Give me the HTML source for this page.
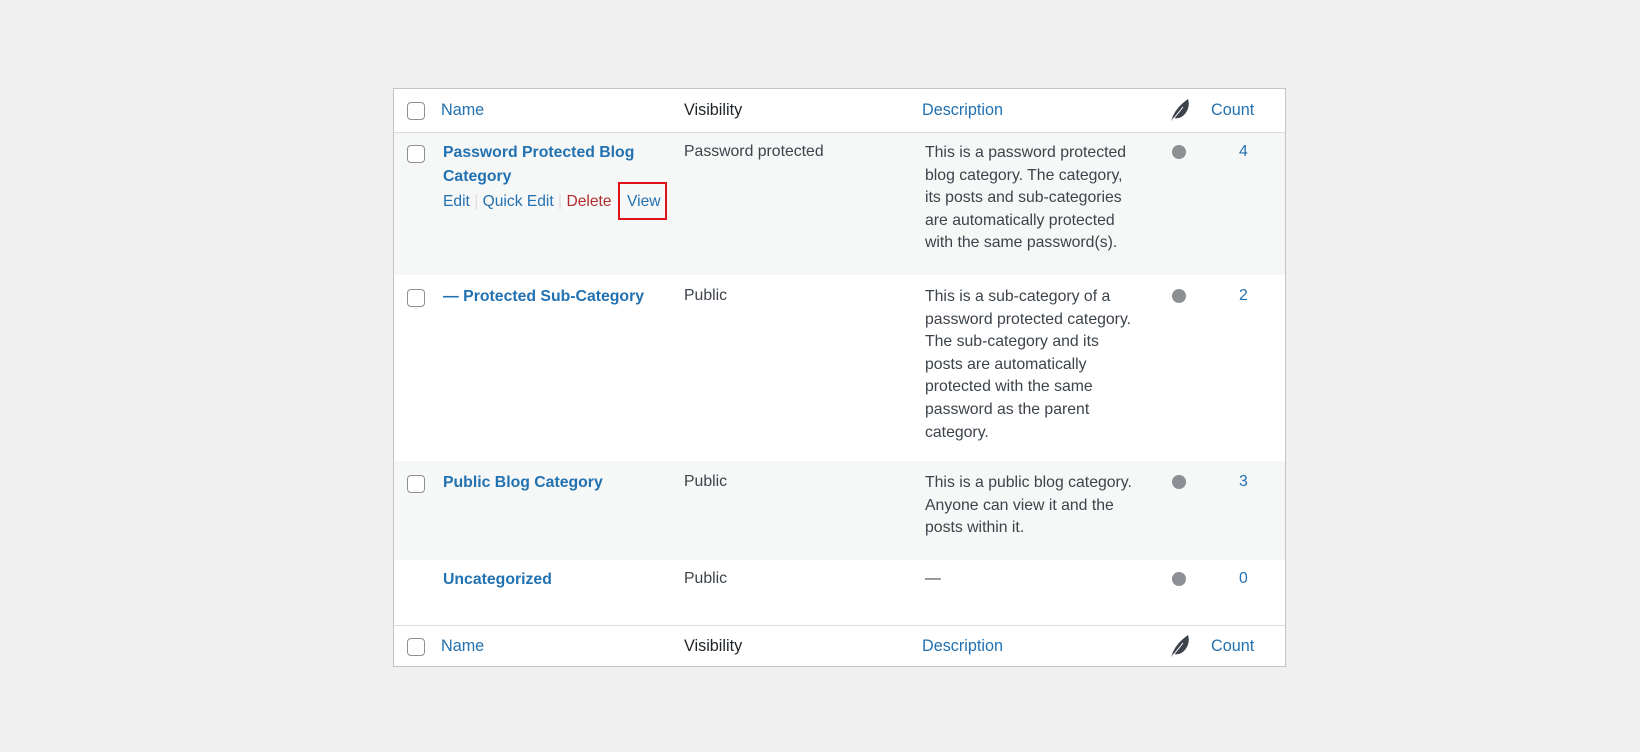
<!DOCTYPE html>
<html><head><meta charset="utf-8"><style>
body{margin:0;width:1640px;height:752px;background:#f0f0f1;font-family:"Liberation Sans",sans-serif;position:relative;overflow:hidden;color:#3c434a}
.t{position:absolute;left:393px;top:88px;width:893px;height:579px;background:#fff;border:1px solid #c3c4c7;box-sizing:border-box}
.r{position:absolute;left:0;width:100%}
.a{position:absolute;white-space:nowrap}
.cb{position:absolute;left:13px;width:16px;height:16px;border:1px solid #8c8f94;border-radius:4px;background:#fff}
.ttl{color:#2271b1;font-weight:bold;font-size:15.8px;line-height:23.5px}
.txt{font-size:15.8px;line-height:22.6px;color:#3c434a}
.lnk{color:#2271b1}
.h{font-size:16.2px}
.dot{position:absolute;left:778px;width:14px;height:14px;border-radius:50%;background:#8c8f94}
</style></head><body>
<div class="t">
 <div class="r" style="top:0;height:43px;border-bottom:1px solid #dcdcde">
  <div class="cb" style="top:13px"></div>
  <div class="a h lnk" style="left:47px;top:12px">Name</div>
  <div class="a h" style="left:290px;top:12px;color:#1d2327">Visibility</div>
  <div class="a h lnk" style="left:528px;top:12px">Description</div>
  <svg class="a" style="left:774px;top:7px" width="24" height="28" viewBox="0 0 24 28"><path d="M3 26 C5 18 9 11 20 3 C22 9 20 15 16 19 C13 22 9 23 5 22 Z" fill="#3c434a"/><path d="M3 26 L15 11" stroke="#fff" stroke-width="1"/></svg>
  <div class="a h lnk" style="left:817px;top:12px">Count</div>
 </div>
 <div class="r" style="top:44px;height:142px;background:#f6f7f7">
  <div class="cb" style="top:12px"></div>
  <div class="a ttl" style="left:49px;top:8px">Password Protected Blog<br>Category</div>
  <div class="a" style="left:49px;top:60px;font-size:15.6px"><span class="lnk">Edit</span> <span style="color:#dcdcde">|</span> <span class="lnk">Quick Edit</span> <span style="color:#dcdcde">|</span> <span style="color:#b32d2e">Delete</span></div>
  <div class="a" style="left:224px;top:49px;width:49px;height:38px;border:2.5px solid #e0131a;box-sizing:border-box"></div>
  <div class="a lnk" style="left:233px;top:60px;font-size:15.6px">View</div>
  <div class="a txt" style="left:290px;top:8px">Password protected</div>
  <div class="a txt" style="left:531px;top:9px">This is a password protected<br>blog category. The category,<br>its posts and sub-categories<br>are automatically protected<br>with the same password(s).</div>
  <div class="dot" style="top:12px"></div>
  <div class="a txt lnk" style="left:845px;top:8px">4</div>
 </div>
 <div class="r" style="top:186px;height:186px">
  <div class="cb" style="top:14px"></div>
  <div class="a ttl" style="left:49px;top:10px">— Protected Sub-Category</div>
  <div class="a txt" style="left:290px;top:10px">Public</div>
  <div class="a txt" style="left:531px;top:11px">This is a sub-category of a<br>password protected category.<br>The sub-category and its<br>posts are automatically<br>protected with the same<br>password as the parent<br>category.</div>
  <div class="dot" style="top:14px"></div>
  <div class="a txt lnk" style="left:845px;top:10px">2</div>
 </div>
 <div class="r" style="top:372px;height:99px;background:#f6f7f7">
  <div class="cb" style="top:14px"></div>
  <div class="a ttl" style="left:49px;top:10px">Public Blog Category</div>
  <div class="a txt" style="left:290px;top:10px">Public</div>
  <div class="a txt" style="left:531px;top:11px">This is a public blog category.<br>Anyone can view it and the<br>posts within it.</div>
  <div class="dot" style="top:14px"></div>
  <div class="a txt lnk" style="left:845px;top:10px">3</div>
 </div>
 <div class="r" style="top:471px;height:65px">
  <div class="a ttl" style="left:49px;top:8px">Uncategorized</div>
  <div class="a txt" style="left:290px;top:8px">Public</div>
  <div class="a txt" style="left:531px;top:8px">—</div>
  <div class="dot" style="top:12px"></div>
  <div class="a txt lnk" style="left:845px;top:8px">0</div>
 </div>
 <div class="r" style="top:536px;height:42px;border-top:1px solid #dcdcde">
  <div class="cb" style="top:12px"></div>
  <div class="a h lnk" style="left:47px;top:11px">Name</div>
  <div class="a h" style="left:290px;top:11px;color:#1d2327">Visibility</div>
  <div class="a h lnk" style="left:528px;top:11px">Description</div>
  <svg class="a" style="left:774px;top:6px" width="24" height="28" viewBox="0 0 24 28"><path d="M3 26 C5 18 9 11 20 3 C22 9 20 15 16 19 C13 22 9 23 5 22 Z" fill="#3c434a"/><path d="M3 26 L15 11" stroke="#fff" stroke-width="1"/></svg>
  <div class="a h lnk" style="left:817px;top:11px">Count</div>
 </div>
</div>
</body></html>
